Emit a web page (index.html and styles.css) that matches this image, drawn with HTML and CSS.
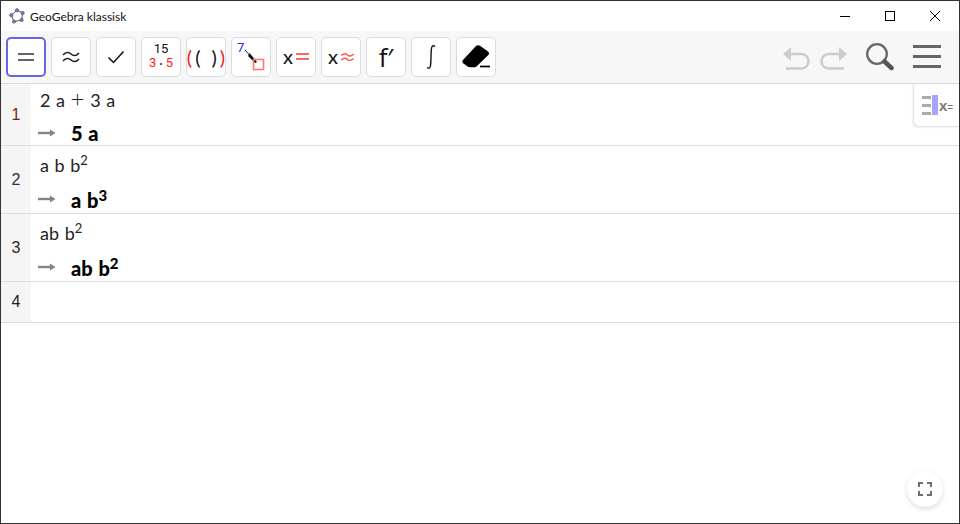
FILE: index.html
```html
<!DOCTYPE html>
<html lang="nb">
<head>
<meta charset="utf-8">
<title>GeoGebra klassisk</title>
<link rel="stylesheet" href="styles.css">
</head>
<body>
<div class="window">
  <header class="titlebar">
    <svg class="app-icon" width="16" height="16" viewBox="0 0 16 16"><path d="M8 2.200 13.600 5 12.600 12 5 13.600 2.300 7.200Z" fill="none" stroke="#555" stroke-width="1"/><g fill="#7a7acc" stroke="#444" stroke-width=".5"><circle cx="8" cy="2.200" r="1.700"/><circle cx="13.600" cy="5" r="1.700"/><circle cx="12.600" cy="12" r="1.700"/><circle cx="5" cy="13.600" r="1.700"/><circle cx="2.300" cy="7.200" r="1.700"/></g></svg>
    <span class="app-title">GeoGebra klassisk</span>
    <div class="win-controls">
      <button class="win-btn"><svg width="12" height="12" viewBox="0 0 12 12"><path d="M1 6.500H11" stroke="#000"/></svg></button>
      <button class="win-btn"><svg width="12" height="12" viewBox="0 0 12 12"><rect x="1.500" y="1.500" width="9" height="9" fill="none" stroke="#000"/></svg></button>
      <button class="win-btn"><svg width="12" height="12" viewBox="0 0 12 12"><path d="M1 1 11 11M11 1 1 11" stroke="#000"/></svg></button>
    </div>
  </header>
  <nav class="toolbar">
    <button class="tool active"><svg width="18" height="10" viewBox="0 0 18 10"><path d="M1 2H17M1 8H17" stroke="#333" stroke-width="1.700"/></svg></button>
    <button class="tool"><svg width="18" height="12" viewBox="0 0 18 12"><path d="M1 4C4 0.500 7 1 9 3S14 5.500 17 2M1 10C4 6.500 7 7 9 9S14 11.500 17 8" fill="none" stroke="#222" stroke-width="1.600"/></svg></button>
    <button class="tool"><svg width="18" height="14" viewBox="0 0 18 14"><path d="M1.500 7.500 6.500 12.500 16.500 1.500" fill="none" stroke="#111" stroke-width="1.500"/></svg></button>
    <button class="tool factor"><span class="f-top">15</span><span class="f-bot">3 <b class="dot">•</b> 5</span></button>
    <button class="tool parens"><span class="red">(</span><span>(</span><span class="gap">)</span><span class="red">)</span></button>
    <button class="tool subst"><span class="seven">7</span><svg width="40" height="40" viewBox="0 0 40 40"><path d="M14 13 L25 25" stroke="#222"/><path d="M18.500 16 L26 25 L24 26 L17 19Z" fill="#111"/><rect x="22.500" y="22.500" width="10" height="10" fill="none" stroke="#f77" stroke-width="1.600"/></svg></button>
    <button class="tool xeq"><span>x</span><svg width="13" height="7" viewBox="0 0 13 7"><path d="M0 1H13M0 6H13" stroke="#f33" stroke-width="1.500"/></svg></button>
    <button class="tool xeq"><span>x</span><svg width="13" height="8" viewBox="0 0 13 8"><path d="M0 2.500C3 0 5 .500 6.500 2S10 3.500 13 1M0 7C3 4.500 5 5 6.500 6.500S10 8 13 5.500" fill="none" stroke="#f55" stroke-width="1.300"/></svg></button>
    <button class="tool deriv">f′</button>
    <button class="tool"><svg width="12" height="26" viewBox="0 0 12 26"><path d="M10 2.500C7 0.500 6.500 3 6.200 7L5.800 19C5.500 23 5 25.500 2 23.500" fill="none" stroke="#111" stroke-width="1.400"/></svg></button>
    <button class="tool"><svg width="28" height="23" viewBox="0 0 28 23"><path d="M14 1C15 0 17 0 18 .700L26 6.500C27.300 7.500 27.300 9 26.300 10L15 21C14 22 13.500 22.300 12.500 22.300H8C7 22.300 6.500 22 5.500 21.500L1.500 18.500C0 17.500 0 16 1 15Z" fill="#000"/><path d="M18 21.500H28" stroke="#000" stroke-width="1.700"/></svg></button>
    <div class="toolbar-right">
      <svg class="undo" width="28" height="24" viewBox="0 0 28 24"><path d="M8 0 0 7 8 14Z" fill="#ccc"/><path d="M7 7H18C28 7 28 21.500 18 21.500H3" fill="none" stroke="#ccc" stroke-width="2.500"/></svg>
      <svg class="redo" width="28" height="24" viewBox="0 0 28 24"><path d="M20 0 28 7 20 14Z" fill="#ccc"/><path d="M21 7H10C0 7 0 21.500 10 21.500H25" fill="none" stroke="#ccc" stroke-width="2.500"/></svg>
      <svg class="search" width="28" height="28" viewBox="0 0 28 28"><circle cx="11" cy="11" r="9.800" fill="none" stroke="#666" stroke-width="2.300"/><path d="M18.500 18.500 25.500 25" stroke="#555" stroke-width="4.500" stroke-linecap="round"/></svg>
      <div class="menu"><span></span><span></span><span></span></div>
    </div>
  </nav>
  <main class="algebra">
    <section class="row row-a">
      <div class="num n1">1</div>
      <div class="cell">
        <div class="input">2 a <span class="op">+</span> 3 a</div>
        <div class="output"><svg class="arrow" width="18" height="8" viewBox="0 0 18 8"><path d="M0 4H15" stroke="#8a8080" stroke-width="2.400"/><path d="M12 .500 17.500 4 12 7.500Z" fill="#8a8080"/></svg><b>5 a</b></div>
      </div>
    </section>
    <section class="row row-b">
      <div class="num n2">2</div>
      <div class="cell">
        <div class="input">a b b<sup>2</sup></div>
        <div class="output"><svg class="arrow" width="18" height="8" viewBox="0 0 18 8"><path d="M0 4H15" stroke="#8a8080" stroke-width="2.400"/><path d="M12 .500 17.500 4 12 7.500Z" fill="#8a8080"/></svg><b>a b<sup>3</sup></b></div>
      </div>
    </section>
    <section class="row row-b">
      <div class="num n3">3</div>
      <div class="cell">
        <div class="input">ab b<sup>2</sup></div>
        <div class="output"><svg class="arrow" width="18" height="8" viewBox="0 0 18 8"><path d="M0 4H15" stroke="#8a8080" stroke-width="2.400"/><path d="M12 .500 17.500 4 12 7.500Z" fill="#8a8080"/></svg><b>ab b<sup>2</sup></b></div>
      </div>
    </section>
    <section class="row row-c">
      <div class="num n4">4</div>
      <div class="cell"></div>
    </section>
    <div class="style-toggle">
      <span class="bars"><i></i><i></i><i></i></span><span class="vbar"></span><span class="xe">x<small>=</small></span>
    </div>
    <button class="fullscreen"><svg width="14" height="14" viewBox="0 0 14 14"><path d="M1 5V1H5M9 1H13V5M13 9V13H9M5 13H1V9" fill="none" stroke="#6e6e6e" stroke-width="2"/></svg></button>
  </main>
</div>
</body>
</html>
```
FILE: styles.css
```css
* { box-sizing: border-box; }
html, body { margin: 0; padding: 0; }
body { width: 960px; height: 524px; overflow: hidden; background: #fff; font-family: "Liberation Sans", sans-serif; }
button { font: inherit; padding: 0; margin: 0; }
.window { width: 960px; height: 524px; border: 1px solid #333; display: flex; flex-direction: column; background: #fff; overflow: hidden; }

.titlebar { height: 30px; flex: none; display: flex; align-items: center; padding-left: 8px; background: #fff; }
.app-icon { margin-right: 5px; }
.app-title { font-family: "Lato", sans-serif; font-size: 12px; color: #111; }
.win-controls { margin-left: auto; display: flex; padding-right: 2px; }
.win-btn { width: 45px; height: 30px; border: 0; background: transparent; display: flex; align-items: center; justify-content: center; }

.toolbar { height: 53px; flex: none; display: flex; align-items: center; gap: 5px; padding: 0 0 1px 5px; background: #f7f7f7; border-bottom: 1px solid #dcdcdc; }
.tool { width: 40px; height: 40px; flex: none; background: #fff; border: 1px solid #dcdcdc; border-radius: 5px; display: flex; align-items: center; justify-content: center; color: #111; position: relative; }
.tool.active { border: 2px solid #6565e8; }
.factor { flex-direction: column; font-family: "Roboto", sans-serif; font-size: 13px; line-height: 14px; }
.f-bot { color: #f22; }
.f-bot .dot { color: #222; font-size: 9px; font-weight: 400; }
.parens { font-family: "Lato", sans-serif; font-size: 20px; gap: 3px; color: #111; line-height: 1; }
.parens .red { color: #e22; }
.parens .gap { margin-left: 8px; }
.subst svg { position: absolute; left: -1px; top: -1px; }
.seven { position: absolute; left: 5px; top: 2px; color: #22f; font-family: "Roboto", sans-serif; font-size: 13px; }
.xeq { font-family: "Lato", sans-serif; font-size: 20px; gap: 3px; line-height: 1; }
.xeq span { position: relative; top: -1px; }
.deriv { font-family: "Open Sans", sans-serif; font-size: 26px; line-height: 1; }

.toolbar-right { margin-left: auto; display: flex; align-items: center; padding-right: 18px; }
.undo { margin-right: 8px; margin-top: 5px; }
.redo { margin-right: 19px; margin-top: 5px; }
.search { margin-right: 19px; }
.menu { width: 28px; display: flex; flex-direction: column; gap: 7px; }
.menu span { display: block; height: 3px; background: #666; }

.algebra { flex: 1; position: relative; background: #fff; }
.row { display: flex; border-bottom: 1px solid #dcdcdc; }
.row-a { height: 62px; }
.row-b { height: 68px; }
.row-c { height: 41px; }
.num { width: 30px; flex: none; background: #f5f5f5; display: flex; align-items: center; justify-content: center; font-family: "Liberation Sans", sans-serif; font-size: 16px; color: #222; }
.n1 { color: #7a1f1f; }
.n2 { color: #2b2b5a; }
.n3 { color: #33221a; }
.cell { flex: 1; padding: 4px 0 0 9px; font-family: "Lato", sans-serif; font-size: 18px; word-spacing: 1px; color: #222; }
.input { height: 33px; line-height: 24px; }
.row-b .input { height: 38px; line-height: 30px; }
.row-b .arrow { margin-top: -2px; }
.op { font-weight: 300; font-size: 24px; line-height: 18px; }
.output { display: flex; align-items: center; height: 24px; color: #000; }
.output b { font-size: 20px; font-weight: 900; margin-left: 15px; }
.arrow { flex: none; margin-left: -2px; }
sup { font-size: 13px; line-height: 0; vertical-align: 7px; }
.output sup { font-size: 15px; font-weight: 900; vertical-align: 7px; }

.style-toggle { position: absolute; right: -1px; top: 0; width: 47px; height: 43px; background: #fff; border-left: 1px solid #e4e4e4; border-bottom: 1px solid #e4e4e4; border-bottom-left-radius: 6px; box-shadow: -1px 1px 2px rgba(0,0,0,.06); display: flex; align-items: center; padding-left: 8px; }
.bars { display: flex; flex-direction: column; gap: 5px; width: 9px; }
.bars i { display: block; height: 3px; background: #aaa; }
.vbar { width: 6px; height: 20px; background: #a6a6ff; margin-left: 1px; }
.xe { font-family: "Liberation Sans", sans-serif; font-weight: 700; font-size: 15px; color: #777; margin-left: 1px; }
.xe small { font-size: 10px; font-weight: 400; }

.fullscreen { position: absolute; left: 906px; top: 387px; width: 36px; height: 36px; border: 0; border-radius: 50%; background: #fff; box-shadow: 0 2px 5px rgba(0,0,0,.14); display: flex; align-items: center; justify-content: center; }
```
